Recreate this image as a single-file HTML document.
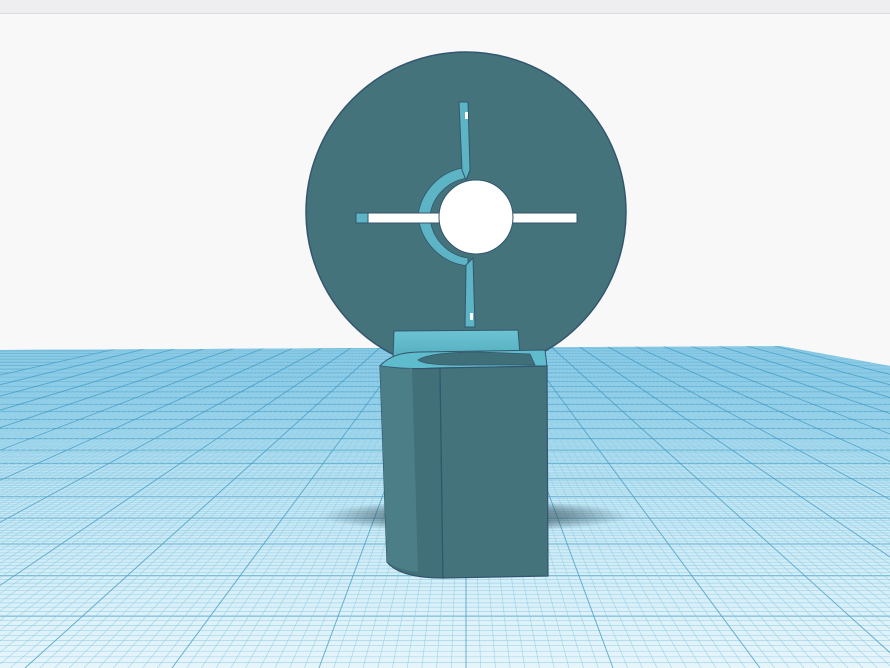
<!DOCTYPE html>
<html><head><style>
html,body{margin:0;padding:0;width:890px;height:668px;overflow:hidden;background:#f8f8f9}
</style></head><body>
<svg width="890" height="668" viewBox="0 0 890 668" xmlns="http://www.w3.org/2000/svg">
<defs>
<linearGradient id="g" x1="0" y1="0" x2="0" y2="1">
<stop offset="0" stop-color="#8fd0ea"/><stop offset="0.4" stop-color="#c2e6f3"/><stop offset="1" stop-color="#e6f5fa"/>
</linearGradient>
<clipPath id="gc"><polygon points="0,350 780,346 890,366 890,668 0,668"/></clipPath>
<linearGradient id="top" x1="0" y1="0" x2="0" y2="1"><stop offset="0" stop-color="#6cc4d3"/><stop offset="1" stop-color="#55aebf"/></linearGradient>
<radialGradient id="sh" cx="0.5" cy="0.5" r="0.5"><stop offset="0" stop-color="#2f4c58" stop-opacity="0.85"/><stop offset="0.6" stop-color="#2f4c58" stop-opacity="0.5"/><stop offset="1" stop-color="#2f4c58" stop-opacity="0"/></radialGradient>
</defs>
<rect x="0" y="0" width="890" height="13" fill="#eeeef0"/>
<line x1="0" y1="13.5" x2="890" y2="13.5" stroke="#dcdce0"/>
<polygon points="0,350 780,346 890,366 890,668 0,668" fill="url(#g)"/>
<g id="grid" clip-path="url(#gc)"></g>
<ellipse cx="475" cy="516" rx="155" ry="16" fill="url(#sh)"/>
<circle cx="466" cy="212" r="160" fill="#44737b" stroke="#33566e" stroke-width="1.5"/>
<path d="M418,215 A56,56 0 0 0 468,266 L468,258 A44,44 0 0 1 430,215 Z" fill="#5cb4c4" stroke="#33566e" stroke-width="0.8"/>
<path d="M418,215 A56,56 0 0 1 462,168 L468,178 A44,44 0 0 0 430,215 Z" fill="#5cb4c4" stroke="#33566e" stroke-width="0.8"/>
<rect x="356" y="213" width="221" height="10" fill="#fff" stroke="#33566e" stroke-width="1"/>
<rect x="356" y="213" width="12" height="10" fill="#5cb4c4" stroke="#33566e" stroke-width="1"/>
<path d="M459,102 L468,102 L470,170 L466,180 L462,170 Z" fill="#5cb4c4" stroke="#33566e" stroke-width="1"/>
<rect x="465" y="112" width="3" height="7" fill="#fff"/>
<path d="M466,265 L473,258 L475,327 L465,327 Z" fill="#5cb4c4" stroke="#33566e" stroke-width="1"/>
<rect x="470" y="313" width="3" height="7" fill="#fff"/>
<circle cx="476" cy="217" r="37" fill="#fff" stroke="#33566e" stroke-width="1"/>
<path d="M394,331 L518,330 L520,354 L393,357 Z" fill="url(#top)" stroke="#33566e" stroke-width="1"/>
<path d="M380,366 Q392,352 420,352 L545,350 L547,366 L440,368 Q392,370 380,366 Z" fill="#5fbccc" stroke="#33566e" stroke-width="1"/>
<path d="M418,360 Q430,352 480,352 L530,354 L535,365 L470,365 Q425,366 418,360 Z" fill="#3f6f78" stroke="#33566e" stroke-width="0.8"/>
<path d="M380,366 Q405,370 440,368 L443,578 Q400,578 387,562 Z" fill="#417079" stroke="#33566e" stroke-width="1.2"/>
<path d="M380,366 Q405,370 412,368 L418,572 Q398,570 387,562 Z" fill="#4b7e87"/>
<path d="M440,368 L547,366 L548,576 L443,578 Z" fill="#44737b" stroke="#33566e" stroke-width="1.2"/>
</svg>
<script>
(function(){
var g=document.getElementById('grid'),s='';
var vy=270,vx=466,A=26300,c=66;
for(var n=0;n<280;n++){var y=vy+A/(n+c);if(y<348)break;
 var maj=n%10==0;s+='<line x1="0" y1="'+y.toFixed(1)+'" x2="890" y2="'+y.toFixed(1)+'" stroke="'+(maj?'#4a9fc8':'#8ccbe6')+'" stroke-width="'+(maj?1:0.7)+'" opacity="'+(maj?0.8:0.7)+'"/>';}
for(var k=-120;k<=120;k++){var xb=vx+k*14.7;var maj=k%10==0;
 s+='<line x1="'+vx+'" y1="'+vy+'" x2="'+xb.toFixed(1)+'" y2="668" stroke="'+(maj?'#4a9fc8':'#8ccbe6')+'" stroke-width="'+(maj?1:0.7)+'" opacity="'+(maj?0.8:0.7)+'"/>';}
g.innerHTML=s;
})();
</script>
</body></html>
